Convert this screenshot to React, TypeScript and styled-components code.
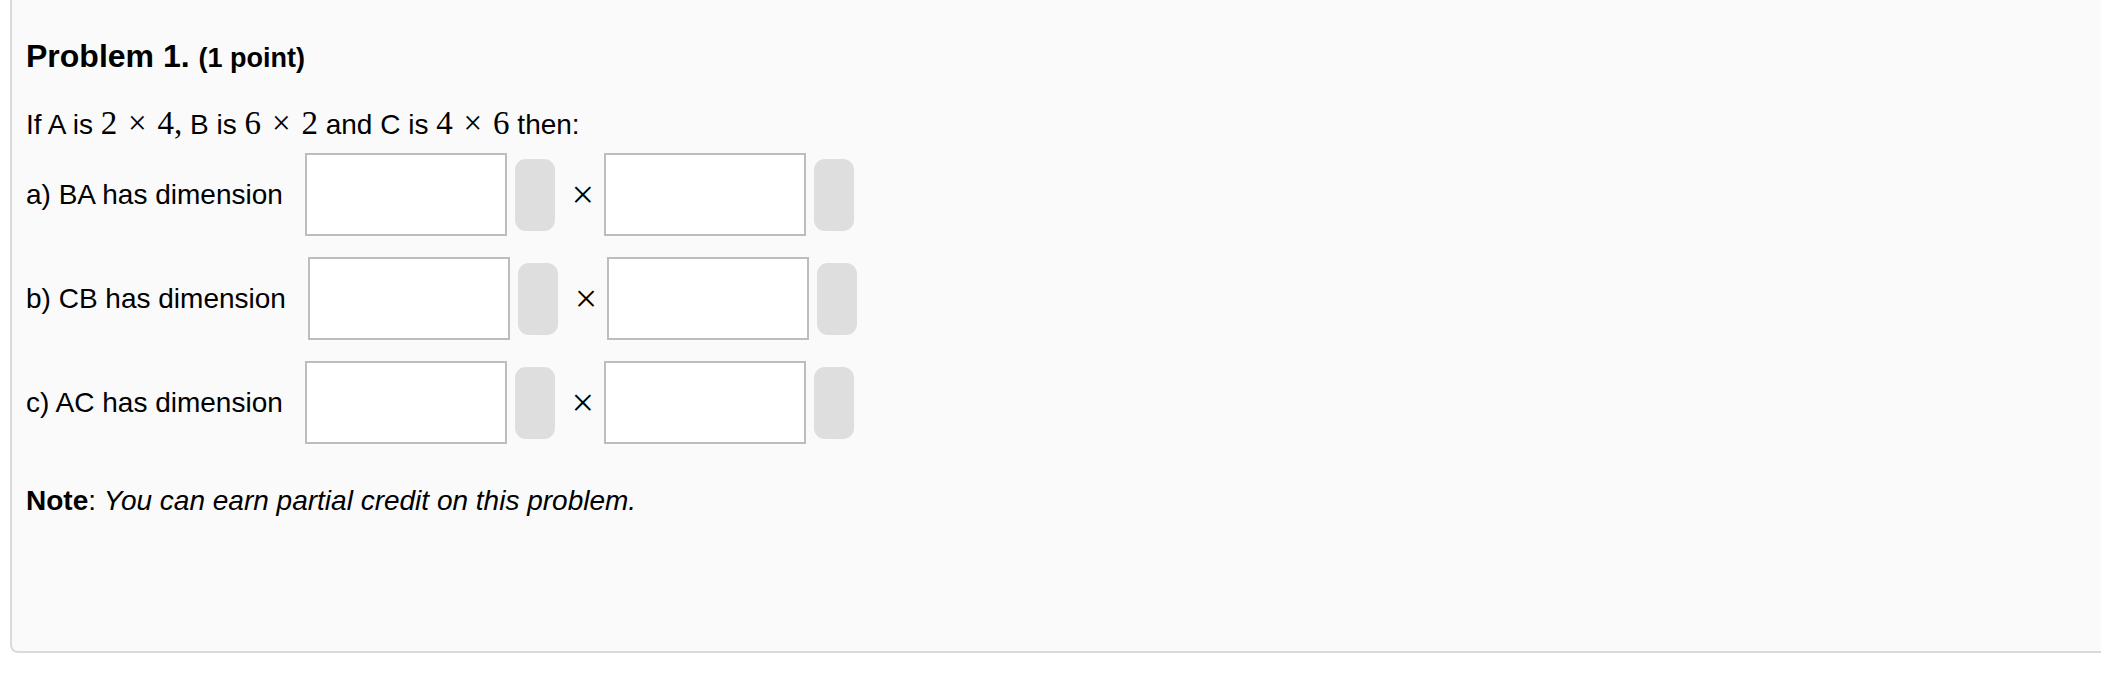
import React from 'react';
import styled, { createGlobalStyle } from 'styled-components';

const GlobalStyle = createGlobalStyle`
  html,
  body {
    margin: 0;
    padding: 0;
    background: #ffffff;
    overflow: hidden;
  }

  body {
    font-family: 'Liberation Sans', Arial, Helvetica, sans-serif;
    color: #000;
  }
`;

interface Part {
  label: string;
}

const parts: Part[] = [
  { label: 'a) BA has dimension' },
  { label: 'b) CB has dimension' },
  { label: 'c) AC has dimension' },
];

const App: React.FC = () => {
  return (
    <>
      <GlobalStyle />
      <ProblemPanel>
        <ProblemTitle>
          Problem 1. <ProblemValue>(1 point)</ProblemValue>
        </ProblemTitle>

        <Prompt>
          If A is <MathExpr a="2" b="4" />
          <MathComma>,</MathComma> B is <MathExpr a="6" b="2" /> and C is{' '}
          <MathExpr a="4" b="6" /> then:
        </Prompt>

        <AnswerList>
          {parts.map((part) => (
            <AnswerRow key={part.label}>
              <AnswerLabel>{part.label}</AnswerLabel>
              <AnswerInput type="text" aria-label={`${part.label} rows`} />
              <FeedbackPill />
              <TimesSign>×</TimesSign>
              <AnswerInput type="text" aria-label={`${part.label} columns`} />
              <FeedbackPill />
            </AnswerRow>
          ))}
        </AnswerList>

        <Note>
          <NoteStrong>Note</NoteStrong>: <NoteText>You can earn partial credit on this problem.</NoteText>
        </Note>
      </ProblemPanel>
    </>
  );
};

const MathExpr: React.FC<{ a: string; b: string }> = ({ a, b }) => (
  <MathSpan>
    {a}
    <MathOp>×</MathOp>
    {b}
  </MathSpan>
);

const ProblemPanel = styled('div')`
  margin-left: 10px;
  background: #fafafa;
  border-left: 2px solid #dadada;
  border-bottom: 2px solid #dadada;
  border-bottom-left-radius: 8px;
  padding: 36px 0 132px 14px;
`;

const ProblemTitle = styled('h3')`
  margin: 0;
  font-size: 32px;
  line-height: 40px;
  font-weight: 700;
`;

const ProblemValue = styled('span')`
  font-size: 27px;
`;

const Prompt = styled('div')`
  margin-top: 29px;
  font-size: 28px;
  line-height: 36px;
`;

const MathSpan = styled('span')`
  font-family: 'Liberation Serif', 'Times New Roman', serif;
  font-size: 33px;
  line-height: 1;
`;

const MathComma = styled('span')`
  font-family: 'Liberation Serif', 'Times New Roman', serif;
  font-size: 33px;
  line-height: 1;
`;

const MathOp = styled('span')`
  margin: 0 0.33em;
`;

const AnswerList = styled('div')`
  margin-top: 10px;
  display: flex;
  flex-direction: column;
  gap: 21px;
`;

const AnswerRow = styled('div')`
  display: flex;
  align-items: center;
  height: 83px;
`;

const AnswerLabel = styled('span')`
  font-size: 28px;
  line-height: 36px;
  margin-right: 22px;
  white-space: nowrap;
`;

const AnswerInput = styled('input')`
  box-sizing: border-box;
  width: 202px;
  height: 83px;
  margin: 0;
  padding: 0 10px;
  background: #ffffff;
  border: 2px solid #bdbdbd;
  border-radius: 0;
  font-size: 28px;
  font-family: inherit;
  outline: none;
`;

const FeedbackPill = styled('span')`
  display: block;
  width: 40px;
  height: 72px;
  margin-left: 8px;
  border-radius: 11px;
  background: #dedede;
`;

const TimesSign = styled('span')`
  box-sizing: border-box;
  width: 49px;
  padding-left: 7px;
  text-align: center;
  font-family: 'Liberation Serif', 'Times New Roman', serif;
  font-size: 40px;
  line-height: 1;
`;

const Note = styled('div')`
  margin-top: 39px;
  font-size: 28px;
  line-height: 36px;
`;

const NoteStrong = styled('b')`
  font-weight: 700;
`;

const NoteText = styled('i')`
  font-style: italic;
`;

export default App;
